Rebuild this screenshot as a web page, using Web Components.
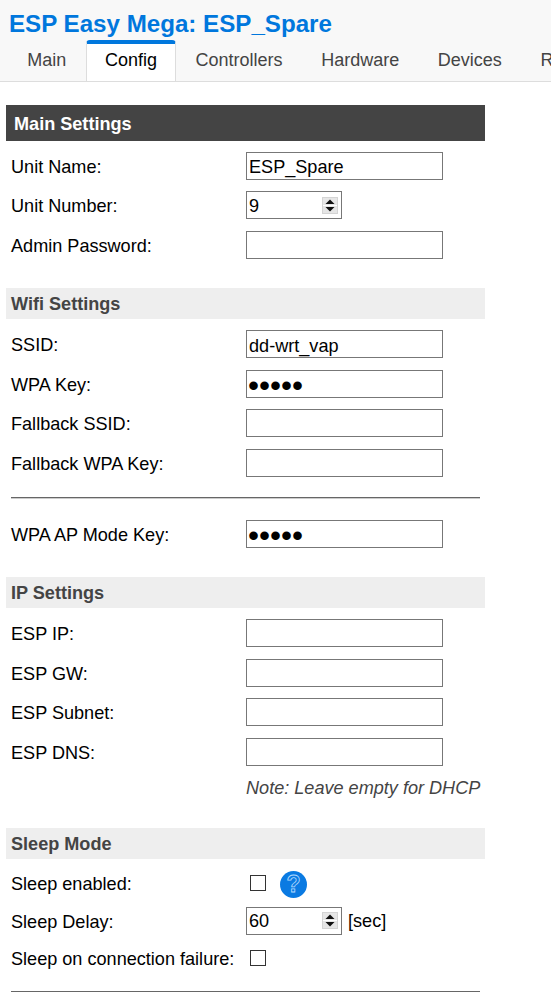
<!DOCTYPE html>
<html>
<head>
<meta charset="utf-8">
<title>ESP Easy Mega: ESP_Spare</title>
<style>
  html, body { margin: 0; background: #fff; overflow: hidden; }
  body { font-family: "Liberation Sans", Arial, sans-serif; color: #000; }
</style>
</head>
<body>
<esp-header title-text="ESP Easy Mega: ESP_Spare">
  <esp-tab>Main</esp-tab>
  <esp-tab active>Config</esp-tab>
  <esp-tab>Controllers</esp-tab>
  <esp-tab>Hardware</esp-tab>
  <esp-tab>Devices</esp-tab>
  <esp-tab>Rules</esp-tab>
</esp-header>

<esp-form>
  <esp-section main>Main Settings</esp-section>
  <esp-row label="Unit Name:"><esp-field value="ESP_Spare"></esp-field></esp-row>
  <esp-row label="Unit Number:"><esp-number value="9"></esp-number></esp-row>
  <esp-row label="Admin Password:"><esp-field></esp-field></esp-row>

  <esp-section>Wifi Settings</esp-section>
  <esp-row label="SSID:"><esp-field value="dd-wrt_vap"></esp-field></esp-row>
  <esp-row label="WPA Key:"><esp-field type="password" value="abcde"></esp-field></esp-row>
  <esp-row label="Fallback SSID:"><esp-field></esp-field></esp-row>
  <esp-row label="Fallback WPA Key:"><esp-field></esp-field></esp-row>
  <esp-rule></esp-rule>
  <esp-row label="WPA AP Mode Key:"><esp-field type="password" value="abcde"></esp-field></esp-row>

  <esp-section>IP Settings</esp-section>
  <esp-row label="ESP IP:"><esp-field></esp-field></esp-row>
  <esp-row label="ESP GW:"><esp-field></esp-field></esp-row>
  <esp-row label="ESP Subnet:"><esp-field></esp-field></esp-row>
  <esp-row label="ESP DNS:"><esp-field></esp-field></esp-row>
  <esp-note>Note: Leave empty for DHCP</esp-note>

  <esp-section>Sleep Mode</esp-section>
  <esp-row compact label="Sleep enabled:"><esp-check></esp-check><esp-help></esp-help></esp-row>
  <esp-row label="Sleep Delay:"><esp-number value="60"></esp-number><span style="margin-left:6px;padding-top:2px">[sec]</span></esp-row>
  <esp-row compact label="Sleep on connection failure:"><esp-check></esp-check></esp-row>
  <esp-rule></esp-rule>
</esp-form>

<script>
const define = (name, css, html, setup) => {
  customElements.define(name, class extends HTMLElement {
    constructor() {
      super()
      this.attachShadow({ mode: 'open' }).innerHTML = `<style>${css}</style>${html}`
      if (setup) setup(this)
    }
  })
}

define('esp-header', `
  :host { display: block; height: 81px; background: #f8f8f8; border-bottom: 1px solid #ddd; overflow: hidden; }
  h1 { margin: 0; padding: 9px 0 0 9px; height: 31px; font-size: 24.15px; line-height: 30px; font-weight: bold; color: #07d; white-space: nowrap; }
  nav { display: flex; padding-left: 8px; white-space: nowrap; }
`, `<h1></h1><nav><slot></slot></nav>`, el => {
  el.shadowRoot.querySelector('h1').textContent = el.getAttribute('title-text')
})

define('esp-tab', `
  :host { display: block; flex: none; box-sizing: border-box; height: 41px; padding: 8px 19.3px 0; font-size: 18px; line-height: 24px; color: #444; }
  :host([active]) { background: #fff; color: #000; border: 1px solid #ddd; border-top: 4px solid #07d; border-bottom: 0; border-radius: 4px 4px 0 0; padding: 4px 18.3px 0; }
`, `<slot></slot>`)

define('esp-form', `
  :host { display: block; width: 479px; margin: 23px 0 0 6px; font-size: 18.1px; }
`, `<slot></slot>`)

define('esp-section', `
  :host { display: block; height: 31px; margin: 23px 0 6px; padding-left: 5px; background: #eee; color: #444; font-size: 18.1px; line-height: 33px; font-weight: bold; }
  :host([main]) { height: 36px; margin: 0 0 5px; padding-left: 8px; background: #444; color: #fff; line-height: 38px; }
`, `<slot></slot>`)

define('esp-row', `
  :host { display: flex; align-items: center; height: 39.5px; padding-left: 5px; font-size: 18.1px; }
  :host([compact]) { height: 35.7px; }
  .label { flex: none; width: 235px; padding-top: 3px; white-space: nowrap; }
  :host([compact]) .label { padding-top: 2px; }
  .value { display: flex; align-items: center; }
`, `<div class="label"></div><div class="value"><slot></slot></div>`, el => {
  el.shadowRoot.querySelector('.label').textContent = el.getAttribute('label')
})

define('esp-field', `
  :host { display: block; }
  input { display: block; box-sizing: border-box; width: 197px; height: 28px; margin: 0; padding: 4px 2px 0; border: 1px solid #777; border-radius: 0; background: #fff; color: #000; font: 18.1px "Liberation Sans", Arial, sans-serif; outline: 0; }
  input[type=password] { font-size: 31.5px; padding: 4px 1px 0; }
`, `<input>`, el => {
  const input = el.shadowRoot.querySelector('input')
  input.type = el.getAttribute('type') || 'text'
  input.value = el.getAttribute('value') || ''
})

define('esp-number', `
  :host { display: flex; align-items: center; box-sizing: border-box; width: 96px; height: 28px; padding-left: 2px; border: 1px solid #777; background: #fff; }
  input { flex: 1; min-width: 0; width: 0; margin: 0; padding: 2px 0 0; border: 0; background: none; color: #000; font: 18.1px "Liberation Sans", Arial, sans-serif; outline: 0; }
  svg { flex: none; display: block; margin-right: 3px; }
`, `<input type="text">
  <svg width="16" height="17" viewBox="0 0 16 17">
    <rect width="16" height="17" fill="#e6e6e6"/>
    <rect x="0" y="8" width="16" height="1" fill="#fff"/>
    <rect x="0.5" y="0.5" width="15" height="16" fill="none" stroke="#d4d4d4"/>
    <path d="M8 2.5 12.5 7H3.5Z" fill="#111"/>
    <path d="M8 14.5 3.5 10H12.5Z" fill="#111"/>
  </svg>`, el => {
  el.shadowRoot.querySelector('input').value = el.getAttribute('value') || ''
})

define('esp-check', `
  :host { display: block; box-sizing: border-box; width: 16px; height: 16px; margin-left: 4px; border: 1px solid #333; background: #fff; }
`, ``)

define('esp-help', `
  :host { display: flex; align-items: center; justify-content: center; width: 27px; height: 27px; margin: 2px 0 0 14px; border-radius: 50%; background: #0a7ae2; color: #0a7ae2; -webkit-text-stroke: 0.8px #b5dbff; font-size: 23px; font-weight: bold; line-height: 1; }
`, `?`)

define('esp-rule', `
  :host { display: block; height: 1px; margin: 14.4px 5px 16.2px; background: #666; box-shadow: 0 1px 0 #ccc; }
  :host(:last-child) { margin-bottom: 0; }
`, ``)

define('esp-note', `
  :host { display: block; height: 33.7px; padding-left: 240px; font-size: 18.1px; line-height: 33px; font-style: italic; color: #444; white-space: nowrap; }
`, `<slot></slot>`)
</script>
</body>
</html>
